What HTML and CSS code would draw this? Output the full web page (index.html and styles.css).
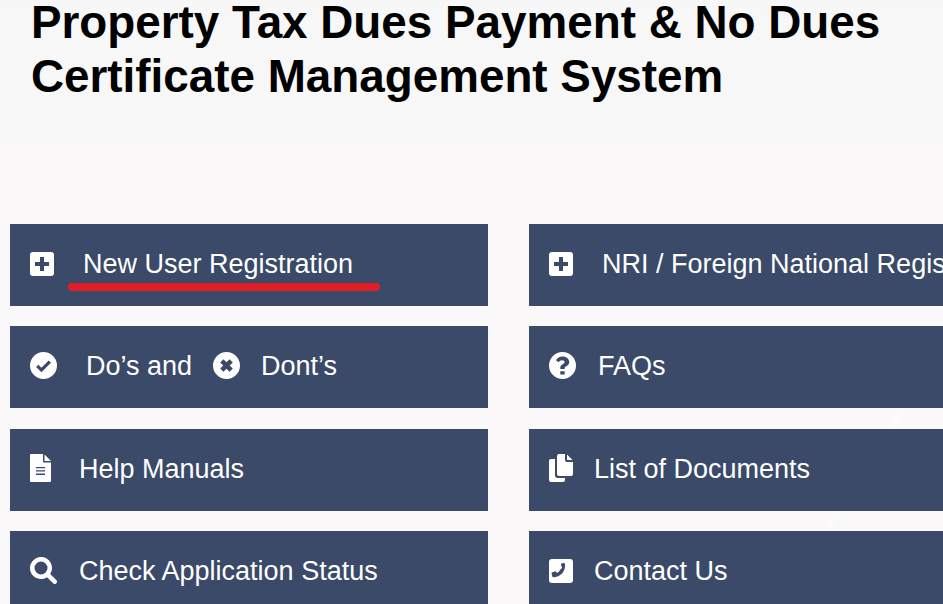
FILE: index.html
```html
<!DOCTYPE html>
<html lang="en">
<head>
<meta charset="utf-8">
<title>Property Tax Dues Payment &amp; No Dues Certificate Management System</title>
<link rel="stylesheet" href="styles.css">
</head>
<body>
<main class="page">
  <h1 class="title">Property Tax Dues Payment &amp; No Dues<br>Certificate Management System</h1>
  <div class="grid">
    <a class="tile" href="#">
      <svg class="icon w24" viewBox="0 0 24 24"><path fill-rule="evenodd" d="M3 0h18a3 3 0 0 1 3 3v18a3 3 0 0 1-3 3H3a3 3 0 0 1-3-3V3a3 3 0 0 1 3-3zM10 5v5H5v4h5v5h4v-5h5v-4h-5V5z"/></svg>
      <span class="label gap-29">New User Registration</span>
      <span class="underline"></span>
    </a>
    <a class="tile" href="#">
      <svg class="icon w24" viewBox="0 0 24 24"><path fill-rule="evenodd" d="M3 0h18a3 3 0 0 1 3 3v18a3 3 0 0 1-3 3H3a3 3 0 0 1-3-3V3a3 3 0 0 1 3-3zM10 5v5H5v4h5v5h4v-5h5v-4h-5V5z"/></svg>
      <span class="label gap-29">NRI / Foreign National Registration</span>
    </a>
    <a class="tile" href="#">
      <svg class="icon w27" viewBox="0 0 27 27"><path fill-rule="evenodd" d="M13.5 0a13.5 13.5 0 1 1 0 27a13.5 13.5 0 0 1 0-27zM11.4 20.300l9.600-9.600-2.300-2.300-7.300 7.300-3-3-2.300 2.300z"/></svg>
      <span class="label gap-29">Do’s and</span>
      <svg class="icon w27 mid" viewBox="0 0 27 27"><path fill-rule="evenodd" d="M13.5 0a13.5 13.5 0 1 1 0 27a13.5 13.5 0 0 1 0-27zM13.5 10.300l-3.100-3.100-3.200 3.200 3.100 3.100-3.100 3.100 3.200 3.200 3.100-3.100 3.100 3.100 3.200-3.200-3.100-3.100 3.100-3.100-3.200-3.200z"/></svg>
      <span class="label gap-21">Dont’s</span>
    </a>
    <a class="tile" href="#">
      <svg class="icon w27" viewBox="0 0 27 27"><path fill-rule="evenodd" d="M13.500 0a13.500 13.500 0 1 1 0 27a13.500 13.500 0 0 1 0-27zM11.300 19.200v3.400h4.400v-3.400zM13.700 4.500c-3.400 0-5.400 1.600-6.700 3.700l2.600 2c.9-1.100 1.600-1.900 3.500-1.900 1.300 0 2.500.7 2.500 1.800 0 1-.8 1.500-2 2.100-1.500.8-2.300 1.800-2.300 3.500v1.300h4.400v-1c0-.9.700-1.300 1.800-2 1.500-.9 2.700-2 2.700-4.100 0-3.300-3.200-5.400-6.500-5.400z"/></svg>
      <span class="label gap-22">FAQs</span>
    </a>
    <a class="tile" href="#">
      <svg class="icon w21" viewBox="0 0 21 28"><path fill-rule="evenodd" d="M1 0h12v7.500a1 1 0 0 0 1 1h7V27a1 1 0 0 1-1 1H1a1 1 0 0 1-1-1V1a1 1 0 0 1 1-1zM6 13v1.300h9V13zM6 16.300v1.300h9v-1.300zM6 19.600v1.300h9v-1.300z"/><path d="M14.500 0.500l6.500 6.500h-6.500z"/></svg>
      <span class="label gap-28">Help Manuals</span>
    </a>
    <a class="tile" href="#">
      <svg class="icon w24 tall" viewBox="0 0 24 28"><path d="M16 0h-6a2 2 0 0 0-2 2v18a2 2 0 0 0 2 2h12a2 2 0 0 0 2-2V8h-6a2 2 0 0 1-2-2z"/><path d="M18 0.500v5.500h5.500z"/><path d="M6 5H2a2 2 0 0 0-2 2v19a2 2 0 0 0 2 2h12a2 2 0 0 0 2-2v-2H9a3 3 0 0 1-3-3z"/></svg>
      <span class="label gap-21">List of Documents</span>
    </a>
    <a class="tile" href="#">
      <svg class="icon w27" viewBox="0 0 27 27"><path fill-rule="evenodd" d="M11 0a11 11 0 0 1 9.200 17l6.100 6.100a2.200 2.200 0 0 1-3.200 3.200L17 20.200A11 11 0 1 1 11 0zM11 4.500a6.500 6.500 0 1 0 0 13a6.500 6.500 0 0 0 0-13z"/></svg>
      <span class="label gap-22">Check Application Status</span>
    </a>
    <a class="tile" href="#">
      <svg class="icon w24" viewBox="0 0 24 24"><path fill-rule="evenodd" d="M3 0h18a3 3 0 0 1 3 3v18a3 3 0 0 1-3 3H3a3 3 0 0 1-3-3V3a3 3 0 0 1 3-3zM15.800 3.800l-3.300.8c-.4.1-.6.500-.5.900.2 1 .5 2 1 2.900.2.300.1.700-.2.900l-1.700 1.500c-.2.500-.4.800-.7 1.200-.6.800-1.300 1.400-2.200 1.900l-1.600-1.400c-.3-.2-.6-.2-.9-.1l-2.700 1.200c-.4.200-.5.500-.4.800l.8 3.300c.1.300.4.500.7.500 7.200 0 12.600-5.900 12-13-.1-.5-.5-.8-1-.7z"/></svg>
      <span class="label gap-21">Contact Us</span>
    </a>
  </div>
</main>
</body>
</html>
```
FILE: styles.css
```css
html, body {
  margin: 0;
  height: 100%;
  overflow: hidden;
}
body {
  background-color: #faf8f9;
  background-image:
    linear-gradient(122deg, transparent 0 87.3%, #fcfbfc 87.6% 87.9%, transparent 88.2%),
    linear-gradient(180deg, #f7f7f8 0, #faf8f9 180px);
  font-family: "Liberation Sans", Arial, sans-serif;
}
.page {
  width: 1020px;
}
.title {
  margin: -4px 0 0;
  padding: 0 0 0 31px;
  height: 108px;
  font-size: 45.8px;
  line-height: 54px;
  font-weight: 700;
  color: #000;
}
.grid {
  display: grid;
  grid-template-columns: 478px 478px;
  column-gap: 41px;
  row-gap: 20.4px;
  margin: 120px 0 0 10px;
}
.tile {
  position: relative;
  display: flex;
  align-items: center;
  height: 82px;
  padding-left: 20px;
  padding-bottom: 3px;
  box-sizing: border-box;
  background: #3a4a68;
  color: #fff;
  text-decoration: none;
  font-size: 27px;
}
.icon {
  flex: none;
  fill: #fff;
}
.w24 { width: 24px; height: 24px; }
.w27 { width: 27px; height: 27px; }
.w21 { width: 21px; height: 28px; }
.w24.tall { width: 24px; height: 28px; }
.mid { margin-left: 21px; }
.label { white-space: nowrap; padding-top: 2px; }
.gap-21 { margin-left: 21px; }
.gap-22 { margin-left: 22px; }
.gap-28 { margin-left: 28px; }
.gap-29 { margin-left: 29px; }
.underline {
  position: absolute;
  left: 58px;
  top: 59px;
  width: 312px;
  height: 8px;
  border-radius: 4px;
  background: #e01e26;
}
```
